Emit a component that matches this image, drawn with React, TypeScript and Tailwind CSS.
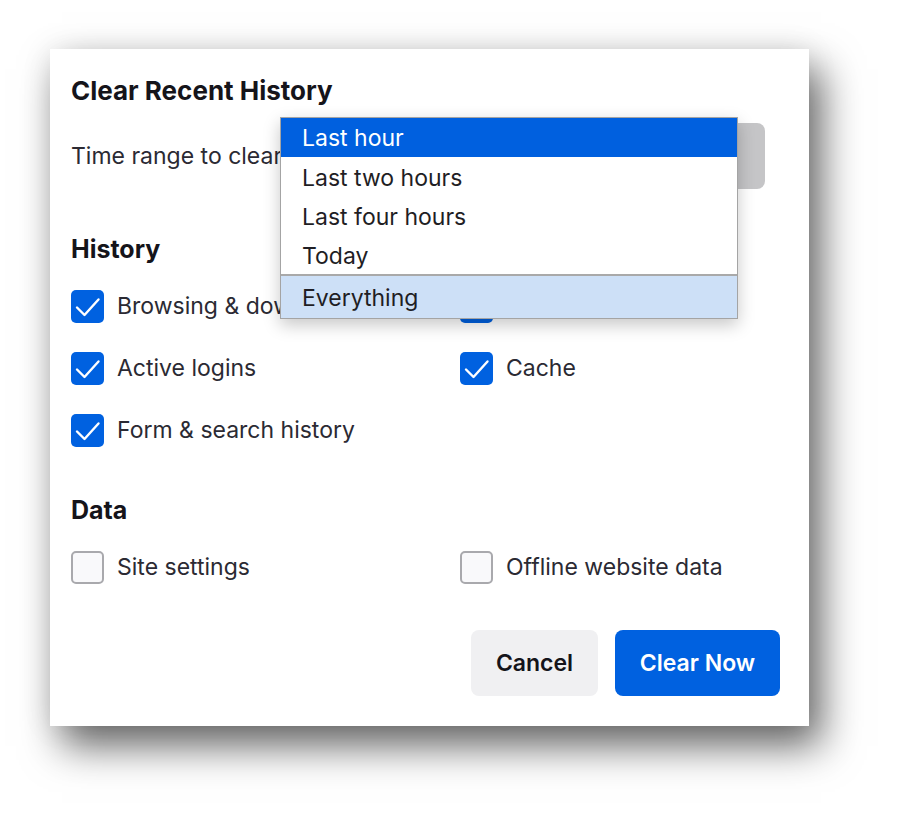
import { useState } from "react";

type Item = { label: string; checked: boolean };

const history: Item[] = [
	{ label: "Browsing & download history", checked: true },
	{ label: "Cookies", checked: true },
	{ label: "Active logins", checked: true },
	{ label: "Cache", checked: true },
	{ label: "Form & search history", checked: true }
];

const data: Item[] = [
	{ label: "Site settings", checked: false },
	{ label: "Offline website data", checked: false }
];

const ranges = ["Last hour", "Last two hours", "Last four hours", "Today"];

const CheckBox = ({ item }: { item: Item }) => {
	return (
		<label className="flex items-center gap-[13px] h-[33px]">
			{item.checked ? (
				<span className="flex items-center justify-center w-[33px] h-[33px] rounded-[5px] bg-[#0061e0]">
					<svg width="33" height="33" viewBox="0 0 33 33" fill="none">
						<path
							d="M6 17.5 L13.5 25 L27.5 9.5"
							stroke="white"
							strokeWidth="2.4"
							strokeLinecap="round"
							strokeLinejoin="round"
						/>
					</svg>
				</span>
			) : (
				<span className="w-[33px] h-[33px] rounded-[5px] border-2 border-[#a9a9ad] bg-[#f9f9fb]"></span>
			)}
			<span className="text-[23px] text-[#2b2a33] whitespace-nowrap">{item.label}</span>
		</label>
	);
};

const Section = ({ title, items }: { title: string; items: Item[] }) => {
	return (
		<div className="flex flex-col">
			<div className="h-[30px] leading-[30px] text-[25px] font-bold text-[#15141a]">{title}</div>
			<div className="grid grid-cols-[389px_1fr] gap-y-[29px] mt-[26px]">
				{items.map((item) => (
					<CheckBox key={item.label} item={item} />
				))}
			</div>
		</div>
	);
};

// open time-range popup, lies over the select and the first row
const RangeMenu = () => {
	return (
		<div className="absolute left-[230px] top-[68px] w-[458px] bg-white border border-[#a4a4a4] shadow-[0_6px_16px_rgba(0,0,0,0.22)] text-[23px] text-[#1f1e24]">
			{ranges.map((r, i) => (
				<div
					key={r}
					className={
						i === 0
							? "h-[39px] leading-[41px] pl-[21px] bg-[#0060df] text-white"
							: "h-[39px] leading-[43px] pl-[21px]"
					}
				>
					{r}
				</div>
			))}
			<div className="h-[44px] leading-[45px] pl-[21px] bg-[#cde0f7] border-t-2 border-[#a9a9a9]">Everything</div>
		</div>
	);
};

export default function App() {
	const [open] = useState(true);

	return (
		<div
			className="w-[907px] h-[825px] bg-white pt-[49px] pl-[50px] overflow-hidden"
			style={{ fontFamily: "Inter, 'Noto Sans', sans-serif" }}
		>
			<div className="relative w-[759px] h-[677px] bg-white shadow-[12px_20px_38px_rgba(0,0,0,0.6),0_0_30px_rgba(0,0,0,0.08)] pl-[21px] pr-[29px] pt-[27px]">
				<div className="h-[30px] leading-[30px] text-[26px] font-bold text-[#15141a]">Clear Recent History</div>

				<div className="flex items-center h-[66px] mt-[17px]">
					<span className="text-[23px] text-[#2b2a33] whitespace-nowrap">Time range to clear:</span>
					<div className="ml-auto mr-[15px] w-[460px] h-[66px] rounded-[8px] bg-[#c5c5c7]"></div>
				</div>

				<div className="mt-[45px]">
					<Section title="History" items={history} />
				</div>

				<div className="mt-[48px]">
					<Section title="Data" items={data} />
				</div>

				<div className="flex justify-end gap-[17px] mt-[46px]">
					<button className="w-[127px] h-[66px] rounded-[8px] bg-[#f0f0f2] text-[23px] font-semibold text-[#15141a]">
						Cancel
					</button>
					<button className="w-[165px] h-[66px] rounded-[8px] bg-[#0061e0] text-[23px] font-semibold text-white">
						Clear Now
					</button>
				</div>

				{open && <RangeMenu />}
			</div>
		</div>
	);
}
